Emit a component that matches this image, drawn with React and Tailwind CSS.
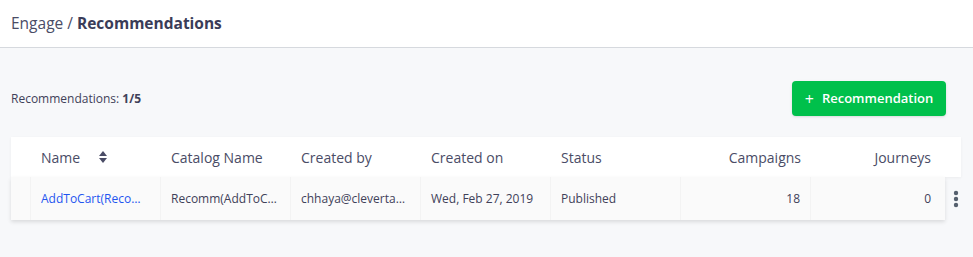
const row = {
  name: "AddToCart(Recommendation)",
  catalog: "Recomm(AddToCart)",
  createdBy: "chhaya@clevertap.com",
  createdOn: "Wed, Feb 27, 2019",
  status: "Published",
  campaigns: 18,
  journeys: 0,
};

function SortIcon() {
  return (
    <svg width="10" height="14" viewBox="0 0 10 14" className="ml-[18px]">
      <path d="M5 1 L9 6 H1 Z" fill="#4a4c66" />
      <path d="M5 13 L9 8 H1 Z" fill="#4a4c66" />
    </svg>
  );
}

function Kebab() {
  return (
    <svg width="6" height="18" viewBox="0 0 6 18">
      <circle cx="3" cy="3" r="2.2" fill="#55606e" />
      <circle cx="3" cy="9" r="2.2" fill="#55606e" />
      <circle cx="3" cy="15" r="2.2" fill="#55606e" />
    </svg>
  );
}

export default function App() {
  return (
    <div
      className="w-[973px] h-[257px] bg-[#f7f8fa] text-[#3f4159] overflow-hidden"
      style={{ fontFamily: "'Open Sans', 'Liberation Sans', sans-serif" }}
    >
      {/* Top bar */}
      <div className="h-[48px] bg-white border-b border-[#d6d9de] flex items-center pl-[11px] text-[15.5px]">
        <span className="text-[#4a4c66]">Engage</span>
        <span className="text-[#4a4c66] mx-[4px]">/</span>
        <span className="font-bold text-[#3a3c58]">Recommendations</span>
      </div>

      {/* Toolbar */}
      <div className="flex items-center justify-between pl-[11px] pr-[27px] pt-[33px] pb-[21px]">
        <div className="text-[12px] text-[#3f4159]">
          Recommendations: <span className="font-bold">1/5</span>
        </div>
        <button className="h-[35px] w-[154px] bg-[#00c04b] rounded-[4px] text-white text-[13px] font-semibold flex items-center justify-center gap-[8px] shadow-sm">
          <span className="text-[16px] font-normal leading-none">+</span>
          Recommendation
        </button>
      </div>

      {/* Table */}
      <div className="ml-[11px] w-[950px]">
        <div className="bg-white h-[40px] flex items-center text-[14px] text-[#4a4c66] shadow-[0_1px_3px_rgba(0,0,0,0.05)]">
          <div className="w-[20px]" />
          <div className="w-[130px] px-[10px] flex items-center">
            Name
            <SortIcon />
          </div>
          <div className="w-[130px] px-[10px]">Catalog Name</div>
          <div className="w-[130px] px-[10px]">Created by</div>
          <div className="w-[130px] px-[10px]">Created on</div>
          <div className="w-[130px] px-[10px]">Status</div>
          <div className="w-[130px] px-[10px] text-right">Campaigns</div>
          <div className="w-[130px] px-[10px] text-right">Journeys</div>
        </div>
        <div className="flex h-[43px] w-[956px] items-center">
          <div className="flex h-full w-[934px] bg-[#fafafa] items-stretch text-[12px] text-[#3f4159] shadow-[0_2px_4px_rgba(0,0,0,0.12)]">
            <div className="w-[20px] border-r border-[#f3f3f3]" />
            <div className="w-[130px] px-[10px] flex items-center border-r border-[#f3f3f3] text-[#1f55f0]">
              <span className="truncate">{row.name}</span>
            </div>
            <div className="w-[130px] px-[10px] flex items-center border-r border-[#f3f3f3]">
              <span className="truncate">{row.catalog}</span>
            </div>
            <div className="w-[130px] px-[10px] flex items-center border-r border-[#f3f3f3]">
              <span className="truncate">{row.createdBy}</span>
            </div>
            <div className="w-[130px] px-[10px] flex items-center border-r border-[#f3f3f3]">
              {row.createdOn}
            </div>
            <div className="w-[130px] px-[10px] flex items-center border-r border-[#f3f3f3]">
              {row.status}
            </div>
            <div className="w-[130px] px-[10px] flex items-center justify-end border-r border-[#f3f3f3]">
              {row.campaigns}
            </div>
            <div className="w-[130px] px-[10px] flex items-center justify-end">
              {row.journeys}
            </div>
          </div>
          <div className="flex-1 flex items-center justify-center">
            <Kebab />
          </div>
        </div>
      </div>
    </div>
  );
}
